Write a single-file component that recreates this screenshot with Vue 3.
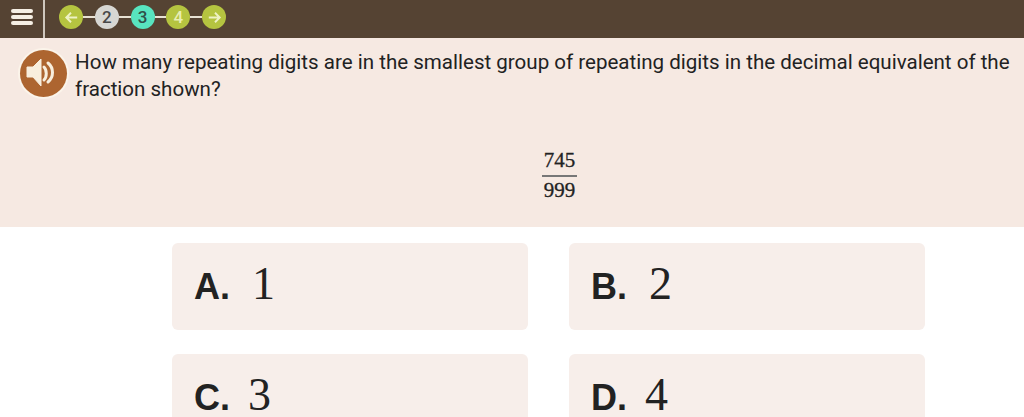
<script setup>
const answers = [
  { label: 'A.', value: '1', row: 'first' },
  { label: 'B.', value: '2', row: 'first' },
  { label: 'C.', value: '3', row: 'second' },
  { label: 'D.', value: '4', row: 'second' },
]
</script>

<template>
  <div class="page">
    <header class="topbar">
      <div class="menu">
        <span></span><span></span><span></span>
      </div>
      <nav class="steps">
        <span class="step green">
          <svg viewBox="0 0 20 20" width="19" height="19"><path d="M16 10H5M9.500 5L4.500 10l5 5" fill="none" stroke="#eef2c4" stroke-width="2"/></svg>
        </span>
        <i class="link"></i>
        <span class="step grey">2</span>
        <i class="link"></i>
        <span class="step teal">3</span>
        <i class="link"></i>
        <span class="step green pale">4</span>
        <i class="link"></i>
        <span class="step green">
          <svg viewBox="0 0 20 20" width="19" height="19"><path d="M4 10h11M10.500 5l5 5-5 5" fill="none" stroke="#eef2c4" stroke-width="2"/></svg>
        </span>
      </nav>
    </header>

    <section class="question">
      <div class="audio">
        <svg viewBox="0 0 47 47" width="47" height="47">
          <path d="M7 17h6l8-8v27l-8-9H7z" fill="#f8eedd" stroke="#f8eedd" stroke-linejoin="round"/>
          <path d="M24 17c3 3 3 10 0 13M28 13c6 5 6 14 0 19" fill="none" stroke="#f8eedd" stroke-width="3" stroke-linecap="round"/>
        </svg>
      </div>
      <div class="body">
        <p class="text">How many repeating digits are in the smallest group of repeating digits in the decimal equivalent of the fraction shown?</p>
        <div class="fraction">
          <span class="num">745</span>
          <span class="den">999</span>
        </div>
      </div>
    </section>

    <section class="answers">
      <div v-for="a in answers" :key="a.label" class="answer" :class="a.row">
        <span class="label">{{ a.label }}</span>
        <span class="value">{{ a.value }}</span>
      </div>
    </section>
  </div>
</template>

<style>
html, body { margin: 0; background: #fff; overflow: hidden; }
</style>

<style scoped>
.page {
  width: 1024px;
  height: 417px;
  overflow: hidden;
  font-family: Roboto, "Liberation Sans", sans-serif;
  background: #fff;
}
.topbar {
  height: 38px;
  background: #554333;
  display: flex;
  align-items: flex-start;
}
.menu {
  width: 43px;
  height: 34px;
  padding-bottom: 4px;
  border-right: 2px solid #cfc7bd;
  display: flex;
  flex-direction: column;
  justify-content: center;
  align-items: center;
  gap: 2px;
}
.menu span {
  width: 22px;
  height: 4px;
  border-radius: 2px;
  background: #f5efe4;
}
.steps {
  display: flex;
  align-items: center;
  margin: 5px 0 0 14px;
}
.step {
  width: 24px;
  height: 24px;
  border-radius: 50%;
  display: flex;
  align-items: center;
  justify-content: center;
  font-size: 17px;
  font-weight: 500;
  color: #484848;
}
.green { background: #b5c440; }
.pale { color: #e9eeb4; }
.grey { background: #d7d7d3; }
.teal { background: #58e4bf; color: #2f5048; }
.link {
  width: 11.800px;
  height: 2px;
  background: #e8e2d4;
}
.question {
  height: 189px;
  background: #f6e9e2;
  display: flex;
  align-items: flex-start;
}
.audio {
  width: 47px;
  height: 47px;
  margin: 12px 0 0 20px;
  border-radius: 50%;
  background: #ad6530;
  box-shadow: 0 0 0 2px #fbf4ea;
  flex: none;
}
.body {
  margin-left: 8px;
  flex: 1;
  min-width: 0;
}
.text {
  margin: 11px 0 0;
  font-size: 20.550px;
  line-height: 27px;
  color: #222;
  width: 945px;
}
.fraction {
  margin: 44px 0 0 467px;
  width: 35px;
  display: flex;
  flex-direction: column;
  align-items: center;
  font-family: "Liberation Serif", serif;
  font-size: 21px;
  color: #222;
  -webkit-text-stroke: 0.3px #222;
}
.num {
  line-height: 27px;
  width: 100%;
  text-align: center;
  border-bottom: 2px solid #777;
  height: 28px;
}
.den {
  line-height: 27px;
}
.answers {
  display: grid;
  grid-template-columns: 356px 356px;
  column-gap: 41px;
  row-gap: 24px;
  padding: 16px 0 0 172px;
}
.answer {
  height: 87px;
  background: #f7eeea;
  border-radius: 6px;
  display: flex;
  align-items: center;
  padding-left: 22px;
  color: #222;
}
.label {
  font-family: "Liberation Sans", sans-serif;
  font-weight: 700;
  font-size: 36px;
  line-height: 38px;
  flex: none;
}
.first .label { width: 58px; }
.second .label { width: 54px; }
.value {
  font-family: "Liberation Serif", serif;
  font-size: 46px;
  line-height: 38px;
  margin-bottom: 5px;
}
</style>
